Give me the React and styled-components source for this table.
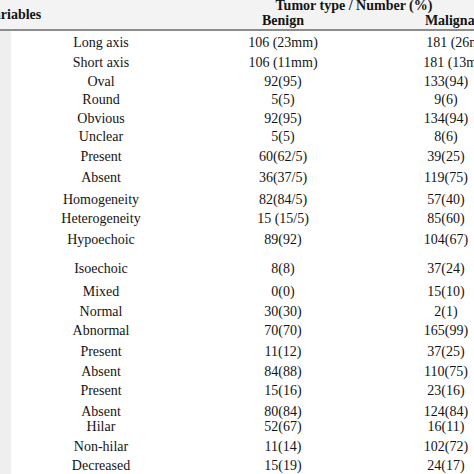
import React from 'react';
import styled, { createGlobalStyle } from 'styled-components';

const GlobalStyle = createGlobalStyle`
    html, body {
        margin: 0;
        padding: 0;
        background: #fff;
        overflow: hidden;
    }
    #root {
        width: 474px;
        height: 474px;
        overflow: hidden;
    }
`;

const cols = '11px 180px 184px 142px';

const rows = [
    { label: 'Long axis', benign: '106 (23mm)', malignant: '181 (26mm)', h: 20, shift: 15 },
    { label: 'Short axis', benign: '106 (11mm)', malignant: '181 (13mm)', h: 18.5, shift: 12 },
    { label: 'Oval', benign: '92(95)', malignant: '133(94)', h: 18.3 },
    { label: 'Round', benign: '5(5)', malignant: '9(6)', h: 19 },
    { label: 'Obvious', benign: '92(95)', malignant: '134(94)', h: 18.3 },
    { label: 'Unclear', benign: '5(5)', malignant: '8(6)', h: 20 },
    { label: 'Present', benign: '60(62/5)', malignant: '39(25)', h: 21 },
    { label: 'Absent', benign: '36(37/5)', malignant: '119(75)', h: 21.7 },
    { label: 'Homogeneity', benign: '82(84/5)', malignant: '57(40)', h: 19.3 },
    { label: 'Heterogeneity', benign: '15 (15/5)', malignant: '85(60)', h: 21.4 },
    { label: 'Hypoechoic', benign: '89(92)', malignant: '104(67)', h: 28.3 },
    { label: 'Isoechoic', benign: '8(8)', malignant: '37(24)', h: 23.3 },
    { label: 'Mixed', benign: '0(0)', malignant: '15(10)', h: 19.7 },
    { label: 'Normal', benign: '30(30)', malignant: '2(1)', h: 19.7 },
    { label: 'Abnormal', benign: '70(70)', malignant: '165(99)', h: 21 },
    { label: 'Present', benign: '11(12)', malignant: '37(25)', h: 20 },
    { label: 'Absent', benign: '84(88)', malignant: '110(75)', h: 19 },
    { label: 'Present', benign: '15(16)', malignant: '23(16)', h: 20.3 },
    { label: 'Absent', benign: '80(84)', malignant: '124(84)', h: 15.7 },
    { label: 'Hilar', benign: '52(67)', malignant: '16(11)', h: 19.6 },
    { label: 'Non-hilar', benign: '11(14)', malignant: '102(72)', h: 18.7 },
    { label: 'Decreased', benign: '15(19)', malignant: '24(17)', h: 24 },
];

const App = () => {
    return (
        <>
            <GlobalStyle />
            <Table>
                <Head>
                    <Variables>Variables</Variables>
                    <Group>Tumor type / Number (%)</Group>
                    <SubHead>Benign</SubHead>
                    <SubHead $shift={10}>Malignant</SubHead>
                </Head>
                <Body>
                    {rows.map((row, index) => (
                        <Row key={index} $h={row.h}>
                            <Strip />
                            <Cell>{row.label}</Cell>
                            <Cell>{row.benign}</Cell>
                            <Cell $shift={row.shift}>{row.malignant}</Cell>
                        </Row>
                    ))}
                </Body>
            </Table>
        </>
    );
};

const Table = styled.div`
    width: 517px;
    height: 474px;
    display: flex;
    flex-direction: column;
    font-family: "Liberation Serif", "Times New Roman", serif;
    font-size: 14px;
    color: #141414;
`;

const Head = styled.div`
    display: grid;
    grid-template-columns: ${cols};
    grid-template-rows: 12px 17px;
    background: #f3f3f3;
    border-bottom: 2px solid #8c8c8c;
    font-weight: bold;
`;

const Variables = styled.div`
    grid-column: 1 / 3;
    grid-row: 1 / 3;
    align-self: center;
    text-indent: -15px;
    line-height: 16px;
    white-space: nowrap;
    overflow: hidden;
`;

const Group = styled.div`
    grid-column: 3 / 5;
    grid-row: 1;
    text-align: center;
    line-height: 12px;
    white-space: nowrap;
`;

const SubHead = styled.div`
    grid-row: 2;
    text-align: center;
    line-height: 17px;
    white-space: nowrap;
    padding-left: ${p => (p.$shift || 0) * 2}px;
`;

const Body = styled.div`
    display: flex;
    flex-direction: column;
    flex: 1;
    background: linear-gradient(to right, #efefef 0, #efefef 11px, #fff 11px);
`;

const Row = styled.div`
    display: grid;
    grid-template-columns: ${cols};
    height: ${p => p.$h}px;
    flex-shrink: 0;
`;

const Strip = styled.div``;

const Cell = styled.div`
    text-align: center;
    line-height: 24px;
    height: 24px;
    white-space: nowrap;
    padding-left: ${p => (p.$shift || 0) * 2}px;
`;

export default App;
